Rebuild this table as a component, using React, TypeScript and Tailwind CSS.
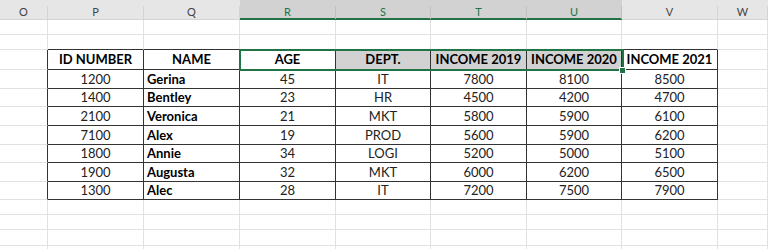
import React from 'react';

const columns = [
  { letter: 'O', width: 48 },
  { letter: 'P', width: 96 },
  { letter: 'Q', width: 96 },
  { letter: 'R', width: 96 },
  { letter: 'S', width: 95 },
  { letter: 'T', width: 96 },
  { letter: 'U', width: 95 },
  { letter: 'V', width: 96 },
  { letter: 'W', width: 50 },
];

const selectedCols = ['R', 'S', 'T', 'U'];

const headers = ['ID NUMBER', 'NAME', 'AGE', 'DEPT.', 'INCOME 2019', 'INCOME 2020', 'INCOME 2021'];

const records = [
  ['1200', 'Gerina', '45', 'IT', '7800', '8100', '8500'],
  ['1400', 'Bentley', '23', 'HR', '4500', '4200', '4700'],
  ['2100', 'Veronica', '21', 'MKT', '5800', '5900', '6100'],
  ['7100', 'Alex', '19', 'PROD', '5600', '5900', '6200'],
  ['1800', 'Annie', '34', 'LOGI', '5200', '5000', '5100'],
  ['1900', 'Augusta', '32', 'MKT', '6000', '6200', '6500'],
  ['1300', 'Alec', '28', 'IT', '7200', '7500', '7900'],
];

type Row = { h: number; kind: 'empty' | 'head' | 'data'; values?: string[] };

const dataHeights = [19, 18, 19, 19, 18, 19, 18];

const rows: Row[] = [
  { h: 15, kind: 'empty' },
  { h: 15, kind: 'empty' },
  { h: 20, kind: 'head', values: headers },
  ...records.map((r, i) => ({ h: dataHeights[i], kind: 'data' as const, values: r })),
  { h: 15, kind: 'empty' },
  { h: 15, kind: 'empty' },
  { h: 16, kind: 'empty' },
  { h: 15, kind: 'empty' },
];

const tableStart = 2;
const tableEnd = tableStart + records.length; // inclusive

function ColumnHeader() {
  return (
    <div className="flex h-[20px] bg-[#e6e6e6]">
      {columns.map((c) => {
        const sel = selectedCols.includes(c.letter);
        return (
          <div
            key={c.letter}
            style={{ width: c.width }}
            className={
              'h-[20px] shrink-0 ' +
              (sel ? 'bg-[#d2d2d2] border-b-2 border-[#217346]' : 'border-b border-[#d4d4d4]')
            }
          >
            <div
              className={
                'mt-[6px] h-[13px] flex items-center justify-center border-r text-[11px] ' +
                (sel ? 'border-[#c0c0c0] text-[#217346]' : 'border-[#d4d4d4] text-[#444]')
              }
            >
              {c.letter}
            </div>
          </div>
        );
      })}
    </div>
  );
}

export default function App() {
  return (
    <div className="w-[768px] h-[249px] overflow-hidden bg-white font-['Lato','Liberation_Sans',sans-serif]">
      <ColumnHeader />
      <div className="relative">
        {rows.map((row, r) => {
          const inTableRow = r >= tableStart && r <= tableEnd;
          return (
            <div key={r} className="flex" style={{ height: row.h }}>
              {columns.map((c, ci) => {
                const inTable = inTableRow && ci >= 1 && ci <= 7;
                const darkRight = inTable || (inTableRow && ci === 0);
                const darkBottom = inTable || (r === tableStart - 1 && ci >= 1 && ci <= 7);
                const value = inTable && row.values ? row.values[ci - 1] : '';
                const isHead = row.kind === 'head';
                const isName = ci === 2 && row.kind === 'data';
                const selectedFill = isHead && ci >= 4 && ci <= 6;
                return (
                  <div
                    key={c.letter}
                    style={{ width: c.width }}
                    className={
                      'shrink-0 flex items-center border-r border-b text-[13px] leading-none ' +
                      (darkRight ? 'border-r-[#333] ' : 'border-r-[#e1e1e1] ') +
                      (darkBottom ? 'border-b-[#333] ' : 'border-b-[#e1e1e1] ') +
                      (isName ? 'justify-start pl-[3px] font-bold text-black ' : 'justify-center ') +
                      (isHead ? 'font-bold text-black ' : 'text-[#222] ') +
                      (selectedFill ? 'bg-[#d2d2d2]' : '')
                    }
                  >
                    {value}
                  </div>
                );
              })}
            </div>
          );
        })}
        <div className="absolute left-[239px] top-[29px] w-[385px] h-[22px] border-2 border-[#217346]" />
        <div className="absolute left-[619px] top-[47px] w-[7px] h-[7px] bg-[#217346] border border-white" />
      </div>
    </div>
  );
}
